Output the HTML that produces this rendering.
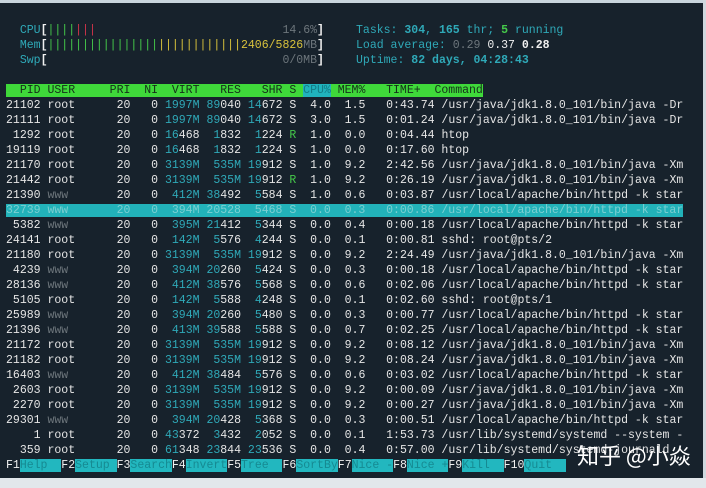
<!DOCTYPE html>
<html><head><meta charset="utf-8"><style>
html,body{margin:0;padding:0}
body{width:706px;height:488px;background:#17222c;position:relative;overflow:hidden}
#top{position:absolute;left:0;top:0;width:706px;height:3px;background:#c9d5dd}
#bot{position:absolute;left:0;top:478px;width:706px;height:10px;background:#e2e7eb}
#rt{position:absolute;left:703px;top:0;width:3px;height:488px;background:#cfd8de}
pre{position:absolute;left:6px;top:23px;margin:0;font-family:"Liberation Mono",monospace;font-size:11.53px;line-height:15px;color:#e6e6e6;white-space:pre}
#p2{left:356px}
.c{color:#2fa9b8}.g{color:#45c84a}.r{color:#d0344a}.y{color:#d8c23c}.d{color:#6d767c}.w{color:#f0f0f0}.b{font-weight:bold}
.hd{background:#3fd93a;color:#15301a}.hc{background:#20b3bd;color:#137c86}
.sel{background:#22b2b9;color:#7ccfd2}
.fk{background:#22b7bf;color:#168a92}
#wm{position:absolute;left:577px;top:441px;font-family:"Noto Sans CJK SC",sans-serif;font-size:22px;line-height:28px;color:#fff;white-space:nowrap}
</style></head><body>
<div id="top"></div><div id="rt"></div><div id="bot"></div>
<pre id="p"></pre>
<pre id="p2"><span class="c">Tasks: <b>304</b>, <b>165</b> thr; </span><span class="g b">5</span><span class="c"> running</span>
<span class="c">Load average: </span><span class="d">0.29</span> <span class="w">0.37</span> <span class="w b">0.28</span>
<span class="c">Uptime: <b>82 days, 04:28:43</b></span></pre>
<div id="wm">知乎 @小焱</div>
<script>
function pad(s,n,l){s=String(s);while(s.length<n)s=l?s+' ':' '+s;return s}
function num(s,n){var t=pad(s,n);if(/M$/.test(s))return '<span class="c">'+t+'</span>';
 if(s.length>=4){var k=t.length-3;return '<span class="c">'+t.slice(0,k)+'</span>'+t.slice(k)}return t}
var L=[];
L.push('  <span class="c">CPU</span><span class="w b">[</span><span class="g">||||</span><span class="r">|||</span>'+pad('',27)+'<span class="d">14.6%</span><span class="w b">]</span>');
L.push('  <span class="c">Mem</span><span class="w b">[</span><span class="g">||||||||||||||||</span><span class="y">||||||||||||2406/5826</span><span class="d">MB</span><span class="w b">]</span>');
L.push('  <span class="c">Swp</span><span class="w b">[</span>'+pad('',34)+'<span class="d">0/0MB</span><span class="w b">]</span>');
L.push('');
L.push('<span class="hd">  PID USER     PRI  NI  VIRT   RES   SHR S </span><span class="hc">CPU%</span><span class="hd"> MEM%   TIME+  Command</span>');
var J='/usr/java/jdk1.8.0_101/bin/java ',H='/usr/local/apache/bin/httpd -k star';
var D=[
['21102','root','1997M','89040','14672','S','4.0','1.5','0:43.74',J+'-Dr'],
['21111','root','1997M','89040','14672','S','3.0','1.5','0:01.24',J+'-Dr'],
['1292','root','16468','1832','1224','R','1.0','0.0','0:04.44','htop'],
['19119','root','16468','1832','1224','S','1.0','0.0','0:17.60','htop'],
['21170','root','3139M','535M','19912','S','1.0','9.2','2:42.56',J+'-Xm'],
['21442','root','3139M','535M','19912','R','1.0','9.2','0:26.19',J+'-Xm'],
['21390','www','412M','38492','5584','S','1.0','0.6','0:03.87',H],
['32739','www','394M','20528','5468','S','0.0','0.3','0:00.86',H],
['5382','www','395M','21412','5344','S','0.0','0.4','0:00.18',H],
['24141','root','142M','5576','4244','S','0.0','0.1','0:00.81','sshd: root@pts/2'],
['21180','root','3139M','535M','19912','S','0.0','9.2','2:24.49',J+'-Xm'],
['4239','www','394M','20260','5424','S','0.0','0.3','0:00.18',H],
['28136','www','412M','38576','5568','S','0.0','0.6','0:02.06',H],
['5105','root','142M','5588','4248','S','0.0','0.1','0:02.60','sshd: root@pts/1'],
['25989','www','394M','20260','5480','S','0.0','0.3','0:00.77',H],
['21396','www','413M','39588','5588','S','0.0','0.7','0:02.25',H],
['21172','root','3139M','535M','19912','S','0.0','9.2','0:08.12',J+'-Xm'],
['21182','root','3139M','535M','19912','S','0.0','9.2','0:08.24',J+'-Xm'],
['16403','www','412M','38484','5576','S','0.0','0.6','0:03.02',H],
['2603','root','3139M','535M','19912','S','0.0','9.2','0:00.09',J+'-Xm'],
['2270','root','3139M','535M','19912','S','0.0','9.2','0:00.27',J+'-Xm'],
['29301','www','394M','20428','5368','S','0.0','0.3','0:00.51',H],
['1','root','43372','3432','2052','S','0.0','0.1','1:53.73','/usr/lib/systemd/systemd --system -'],
['359','root','61348','23844','23536','S','0.0','0.4','0:57.00','/usr/lib/systemd/systemd-journald']];
D.forEach(function(r,i){
 if(i==7){L.push('<span class="sel">'+pad(r[0],5)+' '+pad(r[1],8,1)+'  20   0 '+pad(r[2],5)+' '+pad(r[3],5)+' '+pad(r[4],5)+' '+r[5]+'  '+r[6]+'  '+r[7]+' '+pad(r[8],9)+' '+r[9]+'</span>');return}
 var u=r[1]=='www'?'<span class="d">'+pad(r[1],8,1)+'</span>':pad(r[1],8,1);
 var s=r[5]=='R'?'<span class="g">R</span>':r[5];
 L.push(pad(r[0],5)+' '+u+'  20   0 '+num(r[2],5)+' '+num(r[3],5)+' '+num(r[4],5)+' '+s+'  '+r[6]+'  '+r[7]+' '+pad(r[8],9)+' '+r[9]);
});
var F=[['F1','Help  '],['F2','Setup '],['F3','Search'],['F4','Invert'],['F5','Tree  '],['F6','SortBy'],['F7','Nice -'],['F8','Nice +'],['F9','Kill  '],['F10','Quit  ']];
L.push(F.map(function(f){return '<span class="w">'+f[0]+'</span><span class="fk">'+f[1]+'</span>'}).join(''));
document.getElementById('p').innerHTML=L.join('\n');
</script>
</body></html>
